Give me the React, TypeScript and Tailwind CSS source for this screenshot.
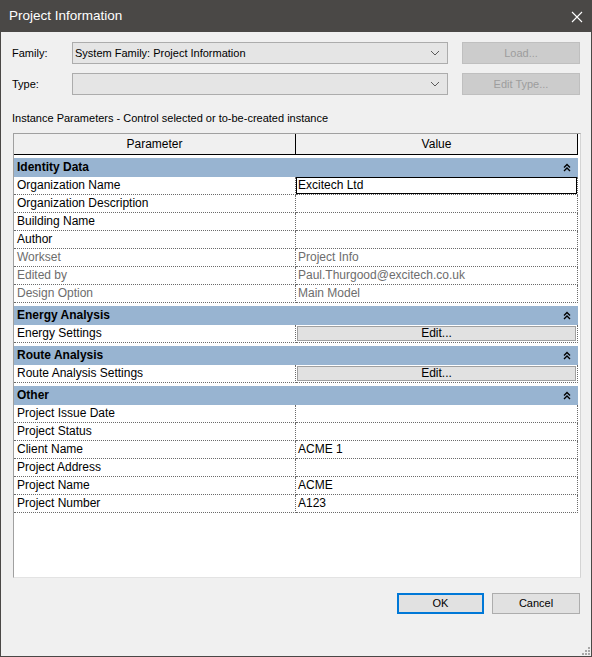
import React from "react";

type Row = { name: string; value?: string; disabled?: boolean; button?: boolean; focused?: boolean };
type Group = { title: string; rows: Row[] };

const groups: Group[] = [
  {
    title: "Identity Data",
    rows: [
      { name: "Organization Name", value: "Excitech Ltd", focused: true },
      { name: "Organization Description" },
      { name: "Building Name" },
      { name: "Author" },
      { name: "Workset", value: "Project Info", disabled: true },
      { name: "Edited by", value: "Paul.Thurgood@excitech.co.uk", disabled: true },
      { name: "Design Option", value: "Main Model", disabled: true },
    ],
  },
  { title: "Energy Analysis", rows: [{ name: "Energy Settings", button: true }] },
  { title: "Route Analysis", rows: [{ name: "Route Analysis Settings", button: true }] },
  {
    title: "Other",
    rows: [
      { name: "Project Issue Date" },
      { name: "Project Status" },
      { name: "Client Name", value: "ACME 1" },
      { name: "Project Address" },
      { name: "Project Name", value: "ACME" },
      { name: "Project Number", value: "A123" },
    ],
  },
];

const font = { fontFamily: '"Liberation Sans", Arial, sans-serif' };

function DoubleChevron() {
  return (
    <svg width="8" height="9" viewBox="0 0 8 9" fill="none" stroke="#000" strokeWidth="1.4">
      <path d="M1 4.5 L4 1.5 L7 4.5" />
      <path d="M1 8 L4 5 L7 8" />
    </svg>
  );
}

function ComboChevron() {
  return (
    <svg width="10" height="6" viewBox="0 0 10 6" fill="none" stroke="#5a5a5a" strokeWidth="1">
      <path d="M1 1 L5 5 L9 1" />
    </svg>
  );
}

function Combo({ text }: { text?: string }) {
  return (
    <div className="flex h-[22px] w-[376px] items-center justify-between border border-[#acacac] bg-[#e5e5e5] pl-[2px] pr-[7px] text-[11px] text-black">
      <span>{text}</span>
      <ComboChevron />
    </div>
  );
}

function DisabledButton({ label }: { label: string }) {
  return (
    <div className="flex h-[22px] w-[118px] items-center justify-center border border-[#bfbfbf] bg-[#cccccc] text-[11px] text-[#9d9d9d]">
      {label}
    </div>
  );
}

function ParamRow({ row }: { row: Row }) {
  const color = row.disabled ? "text-[#6d6d6d]" : "text-black";
  return (
    <div className="flex h-[18px] text-[12px]">
      <div className={`flex w-[282px] items-center border-b border-r border-dotted border-[#6b6b6b] pl-[3px] ${color}`}>
        {row.name}
      </div>
      <div className="flex w-[282px] border-b border-r border-dotted border-[#6b6b6b]">
        {row.button ? (
          <div className="mx-[1px] my-[1px] flex flex-1 items-center justify-center border border-[#a0a0a0] bg-[#e1e1e1] text-black">
            Edit...
          </div>
        ) : row.focused ? (
          <div className="flex flex-1 items-center border border-black bg-white pl-[1px] text-black">
            {row.value}
          </div>
        ) : (
          <div className={`flex flex-1 items-center pl-[2px] ${color}`}>{row.value}</div>
        )}
      </div>
    </div>
  );
}

export default function App() {
  return (
    <div className="h-[657px] w-[592px] overflow-hidden bg-[#f0f0f0]" style={font}>
      <div className="flex h-[657px] flex-col border border-[#4a4846]">
        {/* title bar */}
        <div className="flex h-[31px] shrink-0 items-center justify-between bg-[#4a4846] pl-[8px] pr-[8px] text-white">
          <span className="text-[13.5px]">Project Information</span>
          <svg width="12" height="12" viewBox="0 0 12 12" stroke="#fff" strokeWidth="1.1">
            <path d="M1 1 L11 11 M11 1 L1 11" />
          </svg>
        </div>

        <div className="flex flex-1 flex-col px-[11px]">
          {/* family / type */}
          <div className="mt-[10px] flex items-center">
            <span className="w-[60px] text-[11px] text-black">Family:</span>
            <Combo text="System Family: Project Information" />
            <div className="ml-[14px]">
              <DisabledButton label="Load..." />
            </div>
          </div>
          <div className="mt-[9px] flex items-center">
            <span className="w-[60px] text-[11px] text-black">Type:</span>
            <Combo />
            <div className="ml-[14px]">
              <DisabledButton label="Edit Type..." />
            </div>
          </div>

          <div className="mt-[15px] text-[11px] text-black">
            Instance Parameters - Control selected or to-be-created instance
          </div>

          {/* table */}
          <div className="ml-[1px] mt-[6px] flex h-[445px] w-[568px] flex-col border border-[#a0a0a0] border-b-[#e3e3e3] border-r-[#d4d4d4] bg-white pr-[2px]">
            <div className="flex h-[21px] shrink-0 text-[12px] text-black">
              <div className="flex w-[282px] items-center justify-center border-b border-r border-black bg-[#f0f0f0]">
                Parameter
              </div>
              <div className="flex w-[282px] items-center justify-center border-b border-r border-black bg-[#f0f0f0]">
                Value
              </div>
            </div>
            {groups.map((g) => (
              <div key={g.title} className="mt-[3px] flex flex-col">
                <div className="flex h-[19px] w-[564px] items-center justify-between bg-[#98b4d1] pl-[3px] pr-[7px] text-[12px] font-bold text-black">
                  <span>{g.title}</span>
                  <DoubleChevron />
                </div>
                {g.rows.map((r) => (
                  <ParamRow key={r.name} row={r} />
                ))}
              </div>
            ))}
          </div>

          {/* buttons */}
          <div className="mt-[15px] flex justify-end gap-[8px]">
            <div className="flex h-[21px] w-[87px] items-center justify-center border-2 border-[#0078d7] bg-[#e1e1e1] text-[11px] text-black">
              OK
            </div>
            <div className="flex h-[21px] w-[88px] items-center justify-center border border-[#adadad] bg-[#e1e1e1] text-[11px] text-black">
              Cancel
            </div>
          </div>

          <div className="flex flex-1 items-end justify-end pb-[1px]">
            <svg width="9" height="9" viewBox="0 0 9 9" fill="#a8a8a8" className="-mr-[10px]">
              <rect x="7" y="1" width="2" height="2" />
              <rect x="4" y="4" width="2" height="2" />
              <rect x="7" y="4" width="2" height="2" />
              <rect x="1" y="7" width="2" height="2" />
              <rect x="4" y="7" width="2" height="2" />
              <rect x="7" y="7" width="2" height="2" />
            </svg>
          </div>
        </div>
      </div>
    </div>
  );
}
